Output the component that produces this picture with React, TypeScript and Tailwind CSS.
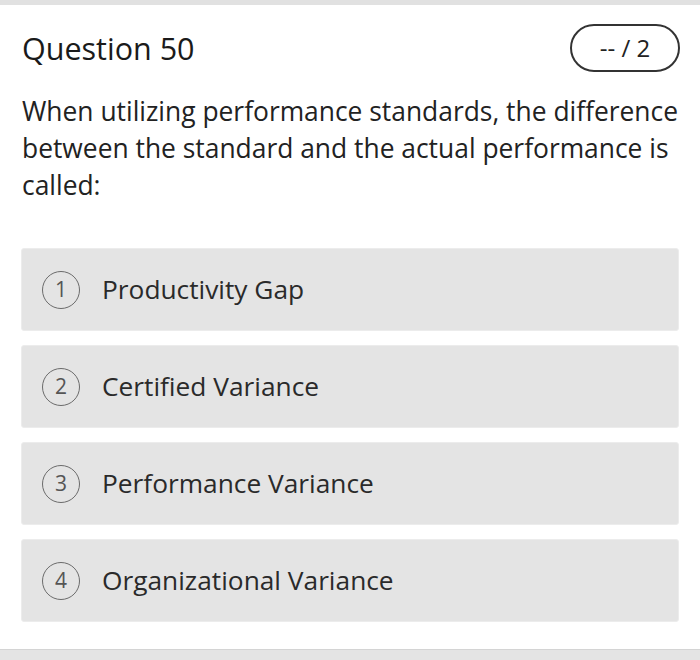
import React from 'react';

const options = [
  'Productivity Gap',
  'Certified Variance',
  'Performance Variance',
  'Organizational Variance',
];

export default function App() {
  return (
    <div
      className="w-[700px] h-[660px] bg-white flex flex-col text-[#222]"
      style={{ fontFamily: '"Open Sans", "Liberation Sans", sans-serif' }}
    >
      {/* top strip */}
      <div className="h-[5px] bg-[#e1e1e1]" />

      <div className="flex-1 px-[21px]">
        {/* header */}
        <div className="flex items-center justify-between pt-[19px]">
          <h1 className="text-[30.5px] leading-[48px] ml-[1px] text-[#1a1a1a]">Question 50</h1>
          <div className="w-[110px] h-[48px] rounded-full border-2 border-[#333] flex items-center justify-center text-[24px] text-[#222] mr-[-1px]">
            -- / 2
          </div>
        </div>

        {/* question */}
        <p className="mt-[21px] mr-[-12px] text-[26.4px] leading-[37px] text-[#222] ml-[1px]">
          When utilizing performance standards, the difference between the standard and the actual performance is called:
        </p>

        {/* options */}
        <div className="mt-[44px] flex flex-col gap-[14px]">
          {options.map((opt, i) => (
            <div
              key={opt}
              className="h-[83px] rounded-[3px] bg-[#e4e4e4] border border-[#ececec] flex items-center pl-[20px]"
            >
              <span className="w-[38px] h-[38px] rounded-full border-[1.5px] border-[#6b6b6b] flex items-center justify-center text-[21px] text-[#555]">
                {i + 1}
              </span>
              <span className="ml-[22px] text-[26.3px] text-[#2a2a2a]">{opt}</span>
            </div>
          ))}
        </div>
      </div>

      {/* bottom strip */}
      <div className="h-[11px] bg-[#e4e4e4] border-t border-[#d4d4d4]" />
    </div>
  );
}
